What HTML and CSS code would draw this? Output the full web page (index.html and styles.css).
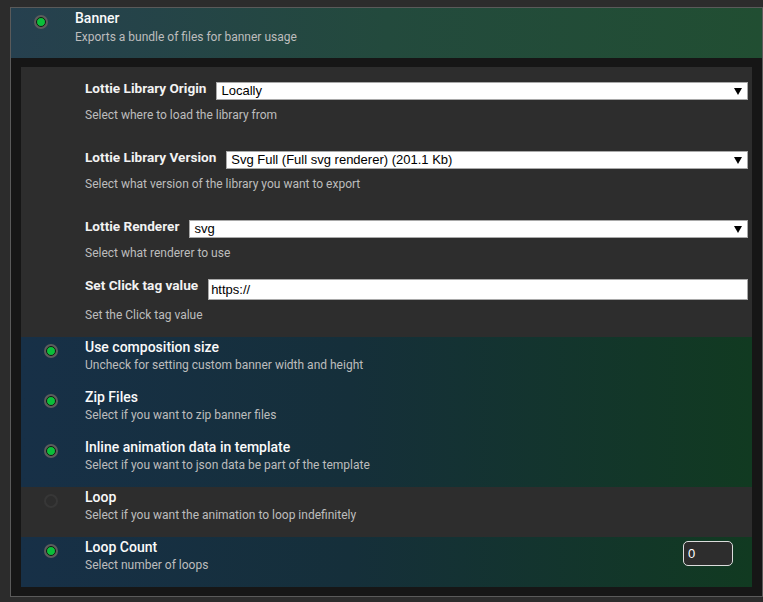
FILE: index.html
```html
<!DOCTYPE html>
<html lang="en">
<head>
    <meta charset="UTF-8">
    <meta name="viewport" content="width=device-width, initial-scale=1.0">
    <title>Banner export</title>
    <link rel="stylesheet" href="styles.css">
</head>
<body>
    <div class="box">
        <!-- Cabecera del modo de exportación -->
        <div class="header">
            <div class="radio-col"><span class="radio"></span></div>
            <div>
                <div class="title">Banner</div>
                <div class="desc header-desc">Exports a bundle of files for banner usage</div>
            </div>
        </div>

        <div class="body">
            <div class="panel">
                <div class="setting">
                    <div class="setting-line">
                        <label class="label">Lottie Library Origin</label>
                        <div class="select-wrap">
                            <select><option>Locally</option></select>
                        </div>
                    </div>
                    <div class="desc">Select where to load the library from</div>
                </div>

                <div class="setting">
                    <div class="setting-line">
                        <label class="label">Lottie Library Version</label>
                        <div class="select-wrap">
                            <select><option>Svg Full (Full svg renderer) (201.1 Kb)</option></select>
                        </div>
                    </div>
                    <div class="desc">Select what version of the library you want to export</div>
                </div>

                <div class="setting">
                    <div class="setting-line">
                        <label class="label">Lottie Renderer</label>
                        <div class="select-wrap">
                            <select><option>svg</option></select>
                        </div>
                    </div>
                    <div class="desc">Select what renderer to use</div>
                </div>

                <div class="setting setting-input">
                    <div class="setting-line">
                        <label class="label">Set Click tag value</label>
                        <input type="text" class="text-input" value="https://">
                    </div>
                    <div class="desc">Set the Click tag value</div>
                </div>

                <!-- Opciones con casilla -->
                <div class="checks">
                    <div class="check">
                        <div class="radio-col"><span class="radio"></span></div>
                        <div>
                            <div class="title">Use composition size</div>
                            <div class="desc">Uncheck for setting custom banner width and height</div>
                        </div>
                    </div>
                    <div class="check">
                        <div class="radio-col"><span class="radio"></span></div>
                        <div>
                            <div class="title">Zip Files</div>
                            <div class="desc">Select if you want to zip banner files</div>
                        </div>
                    </div>
                    <div class="check">
                        <div class="radio-col"><span class="radio"></span></div>
                        <div>
                            <div class="title">Inline animation data in template</div>
                            <div class="desc">Select if you want to json data be part of the template</div>
                        </div>
                    </div>
                </div>

                <div class="check check-off">
                    <div class="radio-col"><span class="radio radio-off"></span></div>
                    <div>
                        <div class="title">Loop</div>
                        <div class="desc">Select if you want the animation to loop indefinitely</div>
                    </div>
                </div>

                <div class="checks">
                    <div class="check">
                        <div class="radio-col"><span class="radio"></span></div>
                        <div>
                            <div class="title">Loop Count</div>
                            <div class="desc">Select number of loops</div>
                        </div>
                        <input type="text" class="count-input" value="0">
                    </div>
                </div>
            </div>
        </div>
    </div>
</body>
</html>
```

FILE: styles.css
```css
body {
    margin: 0;
    background: #2c2c2c;
    font-family: Roboto, 'Liberation Sans', sans-serif;
    color: #f2f2f2;
}
.box {
    margin: 7px 0 0 10px;
    width: 751px;
    border: 1px solid #5a5a5a;
    background: #161616;
}
.header {
    display: flex;
    height: 50px;
    background: linear-gradient(to right, #26404f, #234a3d 50%, #214e32);
}
.radio-col {
    width: 64px;
    flex-shrink: 0;
}
.radio {
    display: block;
    width: 14px;
    height: 14px;
    margin: 7px 0 0 23px;
    border-radius: 50%;
    background: #5c5c5c;
    position: relative;
}
.radio::after {
    content: "";
    position: absolute;
    left: 2px;
    top: 2px;
    width: 8px;
    height: 8px;
    border: 1px solid #151515;
    border-radius: 50%;
    background: #0bbf3a;
}
.check .radio {
    margin-top: 6px;
}
.radio-off {
    background: #373737;
}
.radio-off::after {
    background: #2d2d2d;
    border-color: #2d2d2d;
}
.title {
    font-size: 14px;
    font-weight: 500;
    line-height: 18px;
    color: #fafafa;
}
.header .title {
    padding-top: 1px;
}
.desc {
    font-size: 12px;
    line-height: 15px;
    color: #bdbdbd;
}
.header-desc {
    margin-top: 3px;
}
.body {
    padding: 9px 10px;
}
.panel {
    background: #2d2d2d;
}
.setting {
    padding: 12px 4px 13px 64px;
}
.setting-input {
    padding-top: 2px;
    padding-bottom: 14px;
}
.setting-line {
    display: flex;
    align-items: flex-start;
    margin-bottom: 8px;
}
.label {
    font-size: 13.6px;
    font-weight: bold;
    line-height: 18px;
    margin-right: 10px;
    white-space: nowrap;
}
.select-wrap {
    flex: 1;
    margin-top: 3px;
    position: relative;
}
.select-wrap::after {
    content: "";
    position: absolute;
    right: 6px;
    top: 6px;
    border-left: 4px solid transparent;
    border-right: 4px solid transparent;
    border-top: 7px solid #000;
    pointer-events: none;
}
select {
    appearance: none;
    -webkit-appearance: none;
    display: block;
    width: 100%;
    height: 18px;
    margin: 0;
    padding: 0 0 0 4px;
    border: 1px solid #a9a9a9;
    border-radius: 0;
    background: #fff;
    color: #000;
    font-family: 'Liberation Sans', Arial, sans-serif;
    font-size: 13px;
    line-height: 16px;
}
.text-input {
    flex: 1;
    min-width: 0;
    height: 21px;
    margin: 3px 0 0;
    padding: 0 2px;
    box-sizing: border-box;
    border: 1px solid #a9a9a9;
    background: #fff;
    color: #000;
    font-family: 'Liberation Sans', Arial, sans-serif;
    font-size: 13px;
    outline: none;
}
.checks {
    background: linear-gradient(to right, #173047, #152f3a 45%, #113a21);
}
.check {
    display: flex;
    height: 50px;
    box-sizing: border-box;
    padding-top: 1px;
}
.check .desc {
    margin-top: 2px;
}
.check-off {
    background: #2d2d2d;
}
.count-input {
    margin: 3px 19px 0 auto;
    width: 50px;
    height: 25px;
    box-sizing: border-box;
    padding: 0 4px;
    border: 1px solid #dcdcdc;
    border-radius: 5px;
    background: #2d2d2d;
    color: #fff;
    font-family: 'Liberation Sans', Arial, sans-serif;
    font-size: 13px;
    outline: none;
}
```
